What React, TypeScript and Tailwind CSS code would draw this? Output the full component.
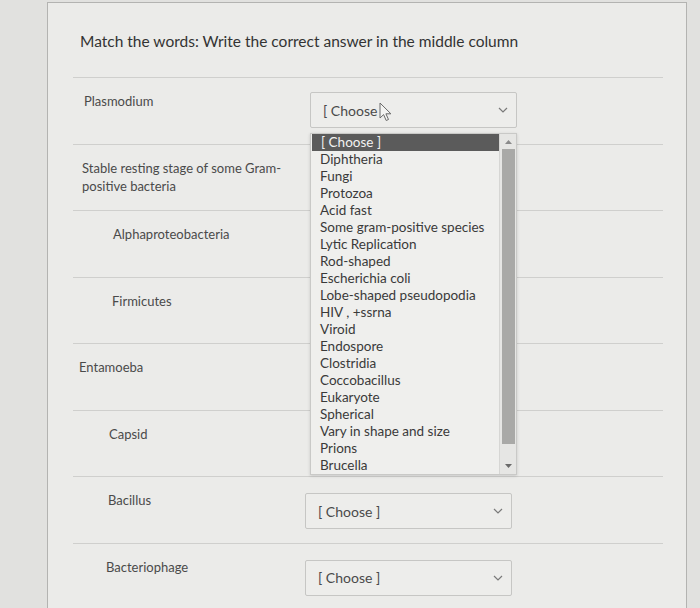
import React from 'react';

const rows = [
  { label: 'Plasmodium', pad: 'pl-[11px]', open: true },
  { label: 'Stable resting stage of some Gram-positive bacteria', pad: 'pl-[9px]', covered: true },
  { label: 'Alphaproteobacteria', pad: 'pl-[40px]', covered: true },
  { label: 'Firmicutes', pad: 'pl-[39px]', covered: true },
  { label: 'Entamoeba', pad: 'pl-[6px]', covered: true },
  { label: 'Capsid', pad: 'pl-[36px]', covered: true },
  { label: 'Bacillus', pad: 'pl-[35px]' },
  { label: 'Bacteriophage', pad: 'pl-[33px]' },
];

const options = [
  '[ Choose ]',
  'Diphtheria',
  'Fungi',
  'Protozoa',
  'Acid fast',
  'Some gram-positive species',
  'Lytic Replication',
  'Rod-shaped',
  'Escherichia coli',
  'Lobe-shaped pseudopodia',
  'HIV , +ssrna',
  'Viroid',
  'Endospore',
  'Clostridia',
  'Coccobacillus',
  'Eukaryote',
  'Spherical',
  'Vary in shape and size',
  'Prions',
  'Brucella',
];

function Chevron() {
  return (
    <svg width="10" height="6" viewBox="0 0 10 6" fill="none" className="shrink-0">
      <path d="M1 1l4 4 4-4" stroke="#7a7a7a" strokeWidth="1.2" />
    </svg>
  );
}

function Cursor() {
  return (
    <svg width="14" height="20" viewBox="0 0 14 20" className="ml-[2px] mt-[3px]">
      <path
        d="M1 1v15l3.6-3.4 2.6 5.9 2.3-1-2.6-5.7h5z"
        fill="#f4f4f2"
        stroke="#6a6a6a"
        strokeWidth="1"
        strokeLinejoin="round"
      />
    </svg>
  );
}

// open list of the first select, drawn over the rows below it
function Dropdown() {
  return (
    <div className="absolute left-0 top-[calc(100%+5px)] z-10 w-[207px] h-[342px] bg-[#efefed] border border-[#c9c9c7] shadow-[0_1px_3px_rgba(0,0,0,0.15)] flex">
      <ul className="flex-1 pl-[1px]">
        {options.map((o, i) => (
          <li
            key={o}
            className={
              i === 0
                ? 'h-[17px] leading-[17px] pl-[9px] bg-[#5b5b5b] text-[#f2f2f2] text-[13.5px]'
                : 'h-[17px] leading-[17px] pl-[8px] text-[#3a3a3a] text-[13.5px]'
            }
          >
            {o}
          </li>
        ))}
      </ul>
      <div className="w-[17px] flex flex-col items-center bg-[#e6e6e4] border-l border-[#d6d6d4]">
        <div className="h-[15px] flex items-center justify-center">
          <svg width="7" height="4" viewBox="0 0 7 4">
            <path d="M0 4L3.5 0 7 4z" fill="#8a8a8a" />
          </svg>
        </div>
        <div className="w-[13px] h-[295px] bg-[#a9a9a7]" />
        <div className="flex-1 flex items-end justify-center pb-[6px]">
          <svg width="7" height="4" viewBox="0 0 7 4">
            <path d="M0 0L3.5 4 7 0z" fill="#6a6a6a" />
          </svg>
        </div>
      </div>
    </div>
  );
}

function Select({ open }: { open?: boolean }) {
  return (
    <div className="relative w-[207px]">
      <div className="h-[36px] border border-[#c6c6c4] bg-[#ededeb] rounded-[2px] flex items-center pl-[12px] pr-[8px]">
        <span className="text-[14px] text-[#4a4a4a] whitespace-nowrap">{open ? '[ Choose' : '[ Choose ]'}</span>
        {open && <Cursor />}
        <span className="flex-1" />
        <Chevron />
      </div>
      {open && <Dropdown />}
    </div>
  );
}

export default function App() {
  return (
    <div
      className="w-[700px] h-[608px] overflow-hidden bg-[#e1e1df]"
      style={{ fontFamily: 'Lato, "Open Sans", sans-serif' }}
    >
      <div className="ml-[47px] mt-[2px] w-[640px] h-[640px] bg-[#ebebe9] border-t border-l border-r border-[#b3b3b1]">
        <h1 className="pl-[32px] pt-[28px] text-[15.5px] leading-[20px] text-[#333333]">
          Match the words: Write the correct answer in the middle column
        </h1>
        <div className="ml-[25px] mt-[26px] w-[590px]">
          {rows.map((r) => (
            <div key={r.label} className="h-[66.5px] border-t border-[#cfcfcd] flex">
              <div className={`w-[232px] pt-[14px] ${r.pad}`}>
                <p className="text-[13px] leading-[18px] text-[#4a4a4a] pr-[4px]">{r.label}</p>
              </div>
              {/* rows under the open list keep their select hidden behind it */}
              <div className={r.open || r.covered ? 'pt-[14px] pl-[5px]' : 'pt-[16px]'}>
                <div className={r.covered ? 'invisible' : ''}>
                  <Select open={r.open} />
                </div>
              </div>
            </div>
          ))}
        </div>
      </div>
    </div>
  );
}
